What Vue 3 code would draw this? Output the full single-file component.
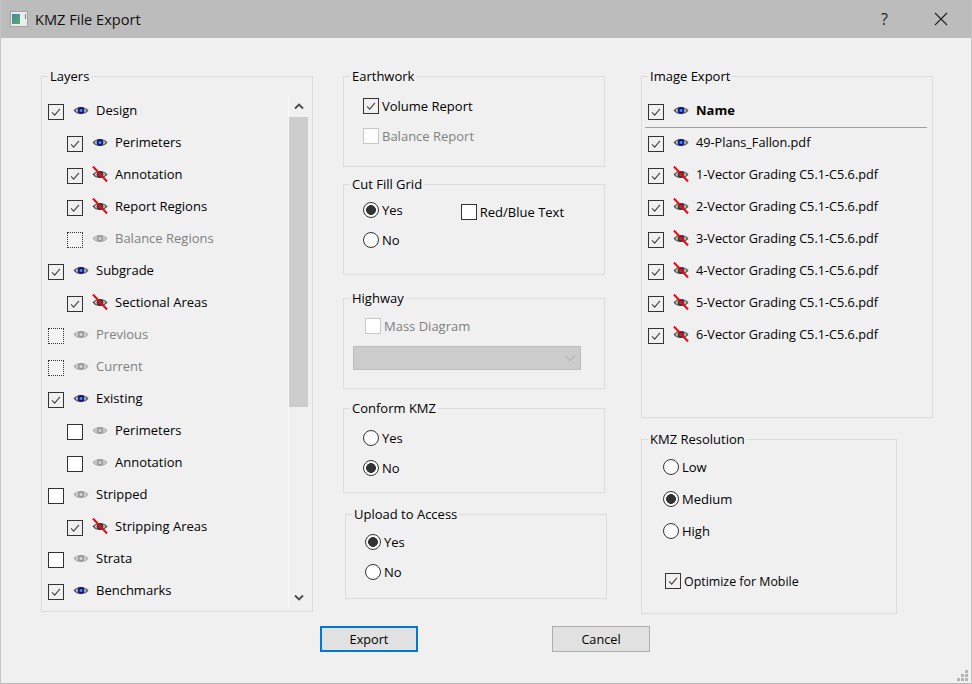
<script setup>
import { h } from 'vue'

const layers = [
  { name: 'Design', checked: true, eye: 'on' },
  { name: 'Perimeters', child: true, checked: true, eye: 'on' },
  { name: 'Annotation', child: true, checked: true, eye: 'off' },
  { name: 'Report Regions', child: true, checked: true, eye: 'off' },
  { name: 'Balance Regions', child: true, eye: 'dim', disabled: true },
  { name: 'Subgrade', checked: true, eye: 'on' },
  { name: 'Sectional Areas', child: true, checked: true, eye: 'off' },
  { name: 'Previous', eye: 'dim', disabled: true },
  { name: 'Current', eye: 'dim', disabled: true },
  { name: 'Existing', checked: true, eye: 'on' },
  { name: 'Perimeters', child: true, eye: 'dim' },
  { name: 'Annotation', child: true, eye: 'dim' },
  { name: 'Stripped', eye: 'dim' },
  { name: 'Stripping Areas', child: true, checked: true, eye: 'off' },
  { name: 'Strata', eye: 'dim' },
  { name: 'Benchmarks', checked: true, eye: 'on' },
]

const images = [
  { name: '49-Plans_Fallon.pdf', eye: 'on' },
  { name: '1-Vector Grading C5.1-C5.6.pdf', eye: 'off' },
  { name: '2-Vector Grading C5.1-C5.6.pdf', eye: 'off' },
  { name: '3-Vector Grading C5.1-C5.6.pdf', eye: 'off' },
  { name: '4-Vector Grading C5.1-C5.6.pdf', eye: 'off' },
  { name: '5-Vector Grading C5.1-C5.6.pdf', eye: 'off' },
  { name: '6-Vector Grading C5.1-C5.6.pdf', eye: 'off' },
]

const resolutions = [
  { name: 'Low' },
  { name: 'Medium', checked: true },
  { name: 'High' },
]

const CHECK = 'M3.5 8.5 L6.5 11.5 L12.5 4.5'

// eye colours per state: outline, iris, pupil
const eyeColors = {
  on: ['#5a5a5a', '#16167e', '#3f8fe8'],
  off: ['#5c5c5c', '#3a3a3a', '#666666'],
  dim: ['#b0b0b0', '#9c9c9c', '#d4d4d4'],
}

const EyeIcon = (props) => {
  const [outline, iris, pupil] = eyeColors[props.state]
  const parts = [
    h('path', { d: 'M0.5 8.5 C3.5 3.8 12.5 3.8 15.5 8.5 C12.5 13.2 3.5 13.2 0.5 8.5 Z', fill: outline }),
    h('path', { d: 'M2.6 8.5 C3.4 7.4 4.2 6.8 5 6.5 L5 10.5 C4.2 10.2 3.4 9.6 2.6 8.5 Z', fill: '#dcdcdc' }),
    h('path', { d: 'M13.4 8.5 C12.6 7.4 11.8 6.8 11 6.5 L11 10.5 C11.8 10.2 12.6 9.6 13.4 8.5 Z', fill: '#dcdcdc' }),
    h('circle', { cx: 8, cy: 8.5, r: 3.4, fill: iris }),
    h('circle', { cx: 8, cy: 8.5, r: 1.5, fill: pupil }),
  ]
  if (props.state === 'off') {
    parts.push(h('path', { d: 'M1 0.5 L15 15.5', stroke: '#f5000f', 'stroke-width': 2 }))
  }
  return h('svg', { class: 'eye', width: 16, height: 16, viewBox: '0 0 16 16' }, parts)
}
</script>

<template>
  <div class="window">
    <div class="titlebar">
      <svg class="app-icon" width="18" height="16" viewBox="0 0 18 16">
        <defs>
          <linearGradient id="appGrad" x1="0" y1="0" x2="1" y2="1">
            <stop offset="0" stop-color="#3f86a4" />
            <stop offset="1" stop-color="#5fa86c" />
          </linearGradient>
        </defs>
        <rect x="0.5" y="0.5" width="17" height="15" fill="#ececec" stroke="#a2a2a2" />
        <rect x="2" y="3" width="8" height="10" fill="url(#appGrad)" />
        <rect x="15" y="3" width="1" height="5" fill="#3f9184" />
      </svg>
      <span class="title">KMZ File Export</span>
      <span class="help">?</span>
      <svg class="close" width="14" height="14" viewBox="0 0 14 14">
        <path d="M1 1 L13 13 M13 1 L1 13" stroke="#222" stroke-width="1.1" fill="none" />
      </svg>
    </div>

    <div class="body">
      <div class="columns">
        <div class="group layers">
          <div class="legend">Layers</div>
          <div class="layers-inner">
            <div class="tree">
              <div
                v-for="(item, i) in layers"
                :key="i"
                class="row"
                :class="{ child: item.child, disabled: item.disabled }"
              >
                <span class="box" :class="{ dotted: item.disabled }">
                  <svg v-if="item.checked" width="14" height="14" viewBox="0 0 16 16"><path :d="CHECK" /></svg>
                </span>
                <EyeIcon :state="item.eye" />
                <span class="label">{{ item.name }}</span>
              </div>
            </div>
            <div class="scrollbar">
              <svg class="arrow up" width="12" height="8" viewBox="0 0 12 8"><path d="M2 6.5 L6 2.5 L10 6.5" /></svg>
              <div class="thumb"></div>
              <svg class="arrow down" width="12" height="8" viewBox="0 0 12 8"><path d="M2 1.5 L6 5.5 L10 1.5" /></svg>
            </div>
          </div>
        </div>

        <div class="middle">
          <div class="group earthwork">
            <div class="legend">Earthwork</div>
            <div class="option first">
              <span class="box"><svg width="14" height="14" viewBox="0 0 16 16"><path :d="CHECK" /></svg></span>
              <span class="label">Volume Report</span>
            </div>
            <div class="option disabled">
              <span class="box"></span>
              <span class="label">Balance Report</span>
            </div>
          </div>

          <div class="group cutfill">
            <div class="legend">Cut Fill Grid</div>
            <div class="cutfill-top">
              <div class="option">
                <span class="radio on"></span>
                <span class="label">Yes</span>
              </div>
              <div class="option redblue">
                <span class="box"></span>
                <span class="label">Red/Blue Text</span>
              </div>
            </div>
            <div class="option">
              <span class="radio"></span>
              <span class="label">No</span>
            </div>
          </div>

          <div class="group highway">
            <div class="legend">Highway</div>
            <div class="option disabled mass">
              <span class="box"></span>
              <span class="label">Mass Diagram</span>
            </div>
            <div class="combo">
              <svg width="12" height="8" viewBox="0 0 12 8"><path d="M1 1.5 L6 6.5 L11 1.5" /></svg>
            </div>
          </div>

          <div class="group conform">
            <div class="legend">Conform KMZ</div>
            <div class="option">
              <span class="radio"></span>
              <span class="label">Yes</span>
            </div>
            <div class="option">
              <span class="radio on"></span>
              <span class="label">No</span>
            </div>
          </div>

          <div class="group upload">
            <div class="legend">Upload to Access</div>
            <div class="option">
              <span class="radio on"></span>
              <span class="label">Yes</span>
            </div>
            <div class="option">
              <span class="radio"></span>
              <span class="label">No</span>
            </div>
          </div>
        </div>

        <div class="right">
          <div class="group image-export">
            <div class="legend">Image Export</div>
            <div class="row head">
              <span class="box"><svg width="14" height="14" viewBox="0 0 16 16"><path :d="CHECK" /></svg></span>
              <EyeIcon state="on" />
              <span class="label name">Name</span>
            </div>
            <div class="divider"></div>
            <div v-for="img in images" :key="img.name" class="row file">
              <span class="box"><svg width="14" height="14" viewBox="0 0 16 16"><path :d="CHECK" /></svg></span>
              <EyeIcon :state="img.eye" />
              <span class="label">{{ img.name }}</span>
            </div>
          </div>

          <div class="group resolution">
            <div class="legend">KMZ Resolution</div>
            <div v-for="r in resolutions" :key="r.name" class="option res">
              <span class="radio" :class="{ on: r.checked }"></span>
              <span class="label">{{ r.name }}</span>
            </div>
            <div class="option mobile">
              <span class="box"><svg width="14" height="14" viewBox="0 0 16 16"><path :d="CHECK" /></svg></span>
              <span class="label">Optimize for Mobile</span>
            </div>
          </div>
        </div>
      </div>

      <div class="buttons">
        <button class="btn primary">Export</button>
        <button class="btn">Cancel</button>
      </div>

      <svg class="grip" width="11" height="11" viewBox="0 0 11 11">
        <g fill="#b4b4b4">
          <rect x="8" y="0" width="3" height="3" />
          <rect x="4" y="4" width="3" height="3" />
          <rect x="8" y="4" width="3" height="3" />
          <rect x="0" y="8" width="3" height="3" />
          <rect x="4" y="8" width="3" height="3" />
          <rect x="8" y="8" width="3" height="3" />
        </g>
      </svg>
    </div>
  </div>
</template>

<style>
html,
body {
  margin: 0;
  background: #f0f0f0;
}
</style>

<style scoped>
.window {
  width: 972px;
  height: 684px;
  box-sizing: border-box;
  display: flex;
  flex-direction: column;
  background: #f0f0f0;
  border-bottom: 1px solid #b8b8b8;
  border-left: 1px solid #c4c4c4;
  border-right: 1px solid #c4c4c4;
  font-family: "Open Sans", "Liberation Sans", sans-serif;
  font-size: 13px;
  color: #000;
  overflow: hidden;
}

.titlebar {
  height: 38px;
  flex-shrink: 0;
  margin: 0 -1px;
  background: #bcbcbc;
  display: flex;
  align-items: center;
  padding-left: 10px;
}
.app-icon {
  margin-right: 7px;
}
.title {
  font-size: 14.6px;
  color: #111;
  flex: 1;
}
.help {
  font-size: 16px;
  color: #222;
  margin-right: 46px;
}
.close {
  margin-right: 24px;
}

.body {
  position: relative;
  flex: 1;
  padding: 33px 0 0 40px;
}
.columns {
  display: flex;
  align-items: flex-start;
}

.group {
  box-sizing: border-box;
  border: 1px solid #dcdcdc;
}
.legend {
  width: fit-content;
  margin: -9px 0 0 6px;
  padding: 0 2px;
  height: 17px;
  line-height: 17px;
  background: #f0f0f0;
}

.layers {
  width: 272px;
  height: 536px;
  margin-top: 5px;
}
.layers-inner {
  display: flex;
}
.tree {
  width: 246px;
  padding: 9px 0 0 6px;
  box-sizing: border-box;
}
.scrollbar {
  box-sizing: border-box;
  width: 20px;
  height: 512px;
  margin-top: 11px;
  border-left: 1px solid #fafafa;
  display: flex;
  flex-direction: column;
  align-items: center;
}
.scrollbar .arrow {
  flex-shrink: 0;
}
.scrollbar .arrow.up {
  margin: 6px 0 7px;
}
.scrollbar .arrow.down {
  margin: auto 0 6px;
}
.scrollbar .arrow path {
  fill: none;
  stroke: #4c4c4c;
  stroke-width: 1.9;
}
.thumb {
  width: 100%;
  height: 290px;
  background: #cdcdcd;
  flex-shrink: 0;
}

.row {
  height: 32px;
  display: flex;
  align-items: center;
}
.row.child {
  padding-left: 19px;
}
.row .box {
  margin-top: 4px;
}
.row .eye {
  margin-left: 9px;
  margin-right: 7px;
  flex-shrink: 0;
}
.row.disabled .label {
  color: #808080;
}
.row.file .label {
  font-size: 12.7px;
}

.box {
  box-sizing: border-box;
  width: 16px;
  height: 16px;
  border: 1px solid #333;
  display: inline-flex;
  align-items: center;
  justify-content: center;
  flex-shrink: 0;
  background: #fff;
}
.box svg path {
  fill: none;
  stroke: #444;
  stroke-width: 1.3;
}
.box:has(svg) {
  background: #f0f0f0;
}
.box.dotted {
  border: 1px dotted #333;
  background: #f4f4f4;
}

.radio {
  box-sizing: border-box;
  width: 16px;
  height: 16px;
  border: 1px solid #333;
  border-radius: 50%;
  background: #fff;
  flex-shrink: 0;
  display: inline-block;
}
.radio.on {
  background: radial-gradient(circle, #333 0 4.6px, #fff 5.2px);
}

.option {
  display: flex;
  align-items: center;
  height: 30px;
  padding-left: 19px;
  gap: 3px;
}
.option.disabled .label {
  color: #808080;
}
.option.disabled .box {
  border-color: #c8c8c8;
  background: #fff;
}

.middle {
  width: 264px;
  margin-left: 30px;
  display: flex;
  flex-direction: column;
}
.earthwork {
  width: 262px;
  height: 91px;
  margin-top: 5px;
}
.earthwork .option.first {
  margin-top: 6px;
}
.cutfill {
  width: 262px;
  height: 91px;
  margin-top: 17px;
}
.cutfill-top {
  display: flex;
  align-items: flex-start;
  height: 30px;
  margin-top: 2px;
}
.redblue {
  margin: 2px 0 0 58px;
  padding-left: 0;
}
.highway {
  width: 262px;
  height: 91px;
  margin-top: 23px;
}
.mass {
  padding-left: 21px;
  margin-top: 4px;
}
.combo {
  box-sizing: border-box;
  width: 228px;
  height: 24px;
  margin: 5px 0 0 9px;
  background: #cccccc;
  border: 1px solid #bcbcbc;
  display: flex;
  align-items: center;
  justify-content: flex-end;
  padding-right: 4px;
}
.combo path {
  fill: none;
  stroke: #a8a8a8;
  stroke-width: 1;
}
.conform {
  width: 262px;
  height: 85px;
  margin-top: 19px;
}
.conform .legend {
  margin-bottom: 6px;
}
.upload {
  width: 262px;
  height: 85px;
  margin-top: 21px;
  margin-left: 2px;
}
.upload .legend {
  margin-bottom: 4px;
}

.right {
  width: 292px;
  margin-left: 34px;
  display: flex;
  flex-direction: column;
}
.image-export {
  height: 342px;
  margin-top: 5px;
  padding-left: 6px;
}
.image-export .legend {
  margin-left: 0;
}
.row.head {
  margin-top: 9px;
}
.name {
  font-weight: 700;
}
.divider {
  height: 1px;
  width: 282px;
  margin: 1px 0 -2px -3px;
  background: #a0a0a0;
}
.resolution {
  width: 256px;
  height: 175px;
  margin-top: 21px;
}
.res {
  height: 32px;
  padding-left: 21px;
}
.resolution .legend {
  margin-bottom: 3px;
}
.mobile {
  padding-left: 23px;
  margin-top: 19px;
}
.mobile .label {
  font-size: 12.4px;
}

.buttons {
  display: flex;
  margin: 12px 0 0 279px;
  gap: 134px;
}
.btn {
  box-sizing: border-box;
  width: 98px;
  height: 26px;
  padding: 0;
  background: #e1e1e1;
  border: 1px solid #adadad;
  font-family: inherit;
  font-size: 12.7px;
  color: #000;
}
.btn.primary {
  border: 2px solid #0078d7;
}

.grip {
  position: absolute;
  right: 3px;
  bottom: 2px;
}
</style>
